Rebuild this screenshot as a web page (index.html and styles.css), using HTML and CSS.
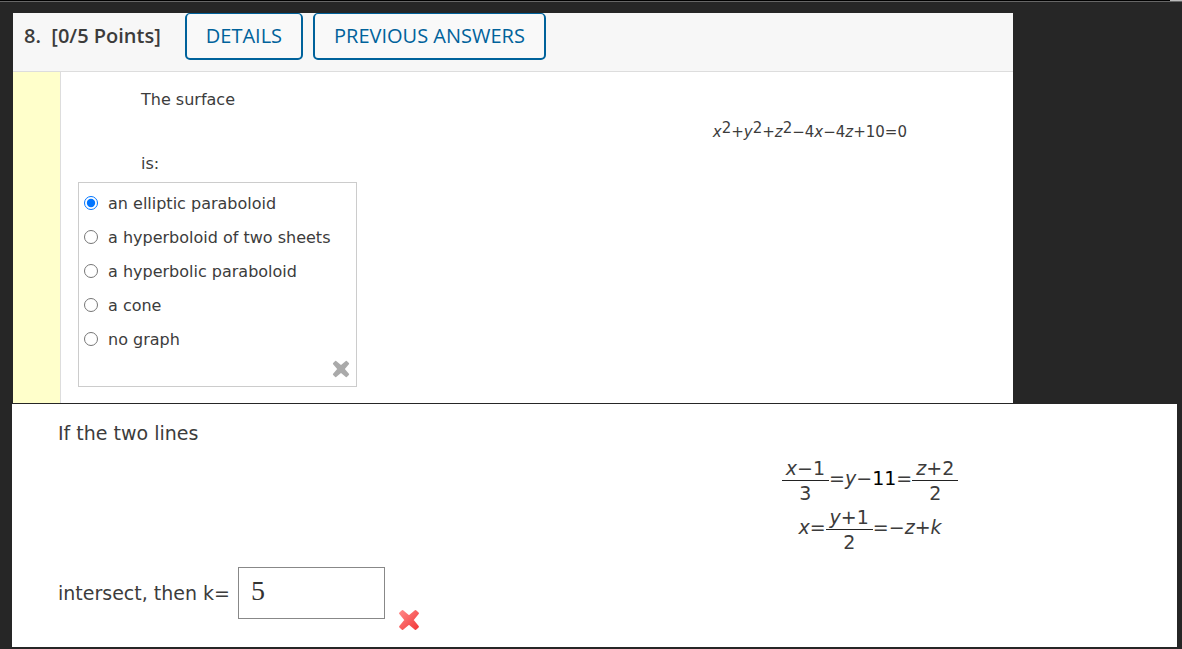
FILE: index.html
```html
<!DOCTYPE html>
<html lang="en">
<head>
    <meta charset="UTF-8">
    <title>Questions</title>
    <link rel="stylesheet" href="styles.css">
</head>
<body>
<div class="topbar"><span></span></div>

<section class="question">
    <header class="question-header">
        <h2>8.&nbsp; [0/5 Points]</h2>
        <button type="button">DETAILS</button>
        <button type="button">PREVIOUS ANSWERS</button>
    </header>
    <div class="question-body">
        <div class="marker"></div>
        <div class="content">
            <p>The surface</p>
            <p class="equation"><i>x</i><sup>2</sup>+<i>y</i><sup>2</sup>+<i>z</i><sup>2</sup>−4<i>x</i>−4<i>z</i>+10=0</p>
            <p>is:</p>
            <div class="choices">
                <label><input type="radio" name="surface" checked>an elliptic paraboloid</label>
                <label><input type="radio" name="surface">a hyperboloid of two sheets</label>
                <label><input type="radio" name="surface">a hyperbolic paraboloid</label>
                <label><input type="radio" name="surface">a cone</label>
                <label><input type="radio" name="surface">no graph</label>
                <svg class="mark-grey" viewBox="0 0 20 20" aria-label="incorrect">
                    <path d="M4 2 2 4 7 10 2 16 4 18 10 13 16 18 18 16 13 10 18 4 16 2 10 7Z" fill="#aaa" stroke="#aaa" stroke-width="2" stroke-linejoin="round"/>
                </svg>
            </div>
        </div>
    </div>
</section>

<section class="lines">
    <p>If the two lines</p>
    <div class="system">
        <div class="row">
            <span class="frac"><span><i>x</i>−1</span><span>3</span></span>
            <span class="term">=<i>y</i>−<b>11</b>=</span>
            <span class="frac"><span><i>z</i>+2</span><span>2</span></span>
        </div>
        <div class="row">
            <span class="term"><i>x</i>=</span>
            <span class="frac"><span><i>y</i>+1</span><span>2</span></span>
            <span class="term">=−<i>z</i>+<i>k</i></span>
        </div>
    </div>
    <div class="answer">
        <label for="k">intersect, then k=</label>
        <input type="text" id="k" value="5">
        <svg class="mark-red" viewBox="0 0 20 20" aria-label="incorrect">
            <defs>
                <linearGradient id="red" x1="0" y1="0" x2="1" y2="1">
                    <stop offset="0" stop-color="#ff8585"/>
                    <stop offset="1" stop-color="#f23c3c"/>
                </linearGradient>
            </defs>
            <path d="M4 2 2 4 7 10 2 16 4 18 10 13 16 18 18 16 13 10 18 4 16 2 10 7Z" fill="url(#red)" stroke="url(#red)" stroke-width="2" stroke-linejoin="round"/>
        </svg>
    </div>
</section>
</body>
</html>
```
FILE: styles.css
```css
* {
    box-sizing: border-box;
}

body {
    margin: 0;
    background: #262626;
    color: #3c3c3c;
    font-family: Verdana, "DejaVu Sans", sans-serif;
    font-size: 16px;
}

p {
    margin: 0;
}

.topbar {
    display: flex;
    justify-content: flex-end;
    height: 2px;
    margin-bottom: 11px;
    background: #000;
    border-bottom: 1px solid #666;
}

.topbar span {
    width: 12px;
    background: #bbb;
}

.question {
    max-width: 1000px;
    margin: 0 13px 1px;
    background: #fff;
}

.question-header {
    display: flex;
    align-items: flex-start;
    gap: 10px;
    height: 59px;
    padding-left: 11px;
    background: #f7f7f7;
    border-bottom: 1px solid #ddd;
    font-family: "Open Sans", sans-serif;
}

.question-header h2 {
    margin: 0 14px 0 0;
    font-size: 20px;
    font-weight: 600;
    line-height: 46px;
}

.question-header button {
    height: 47px;
    padding: 0 19px 1px;
    border: 2px solid #00629b;
    border-top-width: 1px;
    border-radius: 5px;
    background: #f9f9f9;
    color: #00629b;
    font-family: inherit;
    font-size: 20px;
    font-weight: 500;
}

.question-body {
    display: flex;
}

.marker {
    width: 48px;
    background: #ffffcb;
    border-right: 1px solid #ddd;
}

.content {
    flex: 1;
    padding: 12px 17px 16px;
}

.content p {
    padding-left: 63px;
    line-height: 32px;
}

.content .equation {
    padding-right: 89px;
    font-size: 15px;
    text-align: right;
}

sup {
    font-size: 15px;
    line-height: 0;
    vertical-align: 4px;
}

/* Answer box */
.choices {
    display: flex;
    flex-direction: column;
    width: 279px;
    margin-top: 2px;
    padding: 4px 6px 8px 5px;
    border: 1px solid #ccc;
}

.choices label {
    display: flex;
    align-items: center;
    gap: 10px;
    line-height: 34px;
}

.choices input {
    width: 14px;
    height: 14px;
    margin: 0 0 3px;
}

.mark-grey {
    align-self: flex-end;
    width: 18px;
    height: 18px;
    margin-top: 3px;
}

/* Second question */
.lines {
    margin: 0 5px 2px 12px;
    padding: 16px 46px 28px;
    background: #fff;
    font-size: 19px;
}

.lines p {
    line-height: 26px;
}

.system {
    display: flex;
    flex-direction: column;
    align-items: center;
    width: 176px;
    margin: 10px 173px 0 auto;
}

.row {
    display: flex;
    align-items: center;
    line-height: 24px;
}

.row b {
    color: #000;
    font-weight: 500;
}

.term {
    padding-bottom: 6px;
}

.frac {
    display: flex;
    flex-direction: column;
    text-align: center;
}

.frac span:first-child {
    padding: 0 4px;
    border-bottom: 1px solid #222;
}

.answer {
    display: flex;
    align-items: center;
    margin-top: 13px;
}

.answer input {
    width: 147px;
    height: 52px;
    margin-left: 8px;
    padding: 0 12px 4px;
    border: 1px solid #888;
    color: #333;
    font-family: "Liberation Serif", serif;
    font-size: 28px;
}

.mark-red {
    align-self: flex-end;
    width: 22px;
    height: 22px;
    margin: 0 0 -12px 13px;
}
```
